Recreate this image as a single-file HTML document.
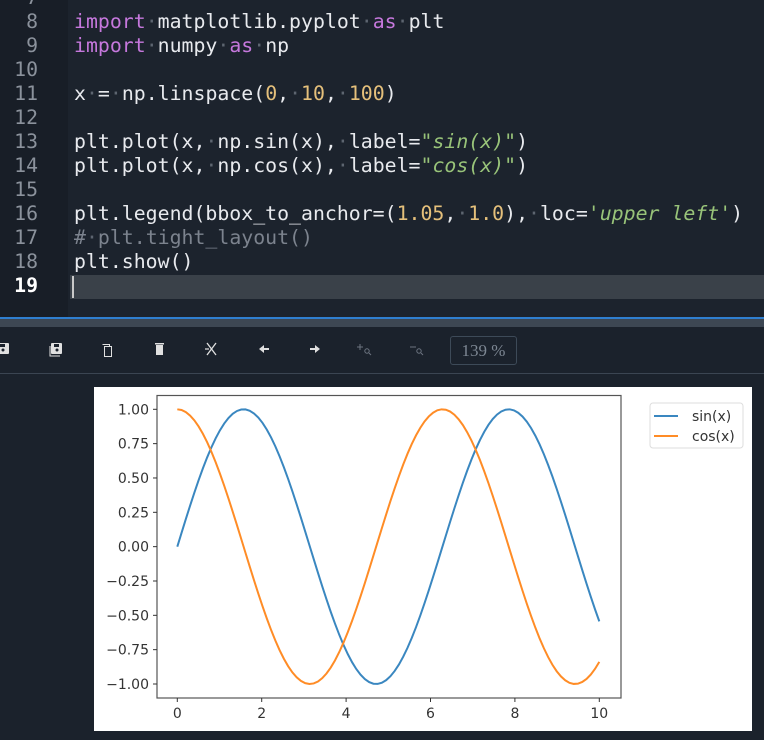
<!DOCTYPE html>
<html><head><meta charset="utf-8"><style>
*{margin:0;padding:0;box-sizing:border-box}
body{width:764px;height:740px;overflow:hidden;background:#1b222c;position:relative;font-family:"DejaVu Sans Mono",monospace}
#ed{position:absolute;left:0;top:0;width:764px;height:317px;background:#1c232d;overflow:hidden}
#gut{position:absolute;left:0;top:0;width:68px;height:317px;background:#181e27}
.ln{position:absolute;left:0;width:38px;text-align:right;font-size:19.8px;color:#8b929c;height:24px;line-height:24px}
.cl{position:absolute;left:74px;font-size:19.85px;color:#e8eaee;height:24px;line-height:24px;white-space:pre}
.k{color:#c678dd}.n{color:#e5c07b}.s{color:#98c379;font-style:italic}.c{color:#7c838e}.d{color:#5d6570}
#cur{position:absolute;left:70px;top:275px;width:694px;height:24px;background:#3a4149}
#caret{position:absolute;left:72px;top:276px;width:2px;height:22px;background:#c9c9c9}
#blue{position:absolute;left:0;top:317px;width:764px;height:2px;background:#2f7fd0}
#bar{position:absolute;left:0;top:319px;width:764px;height:8px;background:#3d4753}
#tb{position:absolute;left:0;top:327px;width:764px;height:47px;background:#1b222c;border-bottom:1px solid #3b4552}
#zoom{position:absolute;left:450px;top:336px;width:67px;height:29px;border:1px solid #3d4a58;border-radius:3px;color:#7d8793;font-family:"Liberation Serif",serif;font-size:17px;text-align:center;line-height:27px}
#fig{position:absolute;left:94px;top:387px;width:658px;height:344px;background:#fff}
</style></head><body>
<div id="ed">
<div id="gut"></div>
<div id="cur"></div><div id="caret"></div>
<div class="ln" style="top:-14px">7</div>
<div class="ln" style="top:10px">8</div>
<div class="ln" style="top:34px">9</div>
<div class="ln" style="top:58px">10</div>
<div class="ln" style="top:82px">11</div>
<div class="ln" style="top:106px">12</div>
<div class="ln" style="top:130px">13</div>
<div class="ln" style="top:154px">14</div>
<div class="ln" style="top:178px">15</div>
<div class="ln" style="top:202px">16</div>
<div class="ln" style="top:226px">17</div>
<div class="ln" style="top:250px">18</div>
<div class="ln" style="top:274px;color:#fff;font-weight:bold">19</div>
<div class="cl" style="top:10px"><span class="k">import</span><span class="d">·</span>matplotlib.pyplot<span class="d">·</span><span class="k">as</span><span class="d">·</span>plt</div>
<div class="cl" style="top:34px"><span class="k">import</span><span class="d">·</span>numpy<span class="d">·</span><span class="k">as</span><span class="d">·</span>np</div>
<div class="cl" style="top:82px">x<span class="d">·</span>=<span class="d">·</span>np.linspace(<span class="n">0</span>,<span class="d">·</span><span class="n">10</span>,<span class="d">·</span><span class="n">100</span>)</div>
<div class="cl" style="top:130px">plt.plot(x,<span class="d">·</span>np.sin(x),<span class="d">·</span>label=<span class="s">"sin(x)"</span>)</div>
<div class="cl" style="top:154px">plt.plot(x,<span class="d">·</span>np.cos(x),<span class="d">·</span>label=<span class="s">"cos(x)"</span>)</div>
<div class="cl" style="top:202px">plt.legend(bbox_to_anchor=(<span class="n">1.05</span>,<span class="d">·</span><span class="n">1.0</span>),<span class="d">·</span>loc=<span class="s">'upper left'</span>)</div>
<div class="cl c" style="top:226px">#<span class="d">·</span>plt.tight_layout()</div>
<div class="cl" style="top:250px">plt.show()</div>
</div>
<div id="blue"></div><div id="bar"></div>
<div id="tb">
<svg width="440" height="47" style="position:absolute;left:0;top:0" fill="#e0e0e0">
<rect x="-2" y="16" width="11" height="11" rx="1"/><rect x="0" y="17" width="5" height="3" fill="#1b222c"/><circle cx="3" cy="23" r="1.5" fill="#1b222c"/>
<rect x="51" y="16" width="11" height="11" rx="1"/><rect x="54" y="17" width="5" height="3" fill="#1b222c"/><circle cx="57" cy="23" r="1.5" fill="#1b222c"/><path d="M50 19v10h10" stroke="#e0e0e0" fill="none"/>
<path d="M102.5 17.5h7v2M104.5 19.5h7v10h-7z" stroke="#e0e0e0" fill="none"/>
<rect x="156" y="18" width="7" height="10"/><rect x="155" y="16" width="9" height="1.5"/>
<path d="M207 16l9 12M216 16l-9 12M205 22h4" stroke="#e0e0e0" stroke-width="1.3" fill="none"/>
<path d="M259 22l5-4v3h5v2h-5v3z"/><path d="M320 22l-5-4v3h-5v2h5v3z"/>
<path d="M360 17v6M357 20h6" stroke="#6c7480" fill="none"/><circle cx="367" cy="24" r="2.2" stroke="#6c7480" fill="none"/><path d="M369 26l2 2" stroke="#6c7480"/>
<path d="M410 20h6" stroke="#6c7480" fill="none"/><circle cx="419" cy="24" r="2.2" stroke="#6c7480" fill="none"/><path d="M421 26l2 2" stroke="#6c7480"/>
</svg>
</div>
<div id="zoom">139 %</div>
<div id="fig">
<svg id="pl" width="658" height="344" style="position:absolute;left:0;top:0" font-family="DejaVu Sans, sans-serif" font-size="14" fill="#333"></svg>
</div>
<script>
var s=document.getElementById('pl'),o='';
var X=function(v){return 177.3-94+v*42.2},Y=function(v){return 409.3-387-(v-1)*137.35};
o+='<rect x="63" y="8.5" width="464" height="302.5" fill="none" stroke="#555" stroke-width="1.2"/>';
var yl=['1.00','0.75','0.50','0.25','0.00','\u22120.25','\u22120.50','\u22120.75','\u22121.00'];
for(var i=0;i<9;i++){var v=1-i*0.25,y=Y(v);o+='<line x1="59" x2="63" y1="'+y+'" y2="'+y+'" stroke="#333"/><text x="55" y="'+(y+5)+'" text-anchor="end">'+yl[i]+'</text>';}
for(var j=0;j<=10;j+=2){var x=X(j);o+='<line y1="311" y2="315" x1="'+x+'" x2="'+x+'" stroke="#333"/><text y="331" x="'+x+'" text-anchor="middle">'+j+'</text>';}
var a='',b='';for(var k=0;k<100;k++){var t=k*10/99;a+=(k?'L':'M')+X(t).toFixed(2)+' '+Y(Math.sin(t)).toFixed(2);b+=(k?'L':'M')+X(t).toFixed(2)+' '+Y(Math.cos(t)).toFixed(2);}
o+='<path d="'+a+'" fill="none" stroke="#3a87c0" stroke-width="2"/><path d="'+b+'" fill="none" stroke="#ff8c26" stroke-width="2"/>';
o+='<rect x="556" y="16" width="93" height="45" rx="3" fill="#fff" stroke="#ddd"/>';
o+='<line x1="560" x2="584" y1="29" y2="29" stroke="#3a87c0" stroke-width="2"/><text x="598" y="34">sin(x)</text>';
o+='<line x1="560" x2="584" y1="49" y2="49" stroke="#ff8c26" stroke-width="2"/><text x="598" y="54">cos(x)</text>';
s.innerHTML=o;
</script>
</body></html>
